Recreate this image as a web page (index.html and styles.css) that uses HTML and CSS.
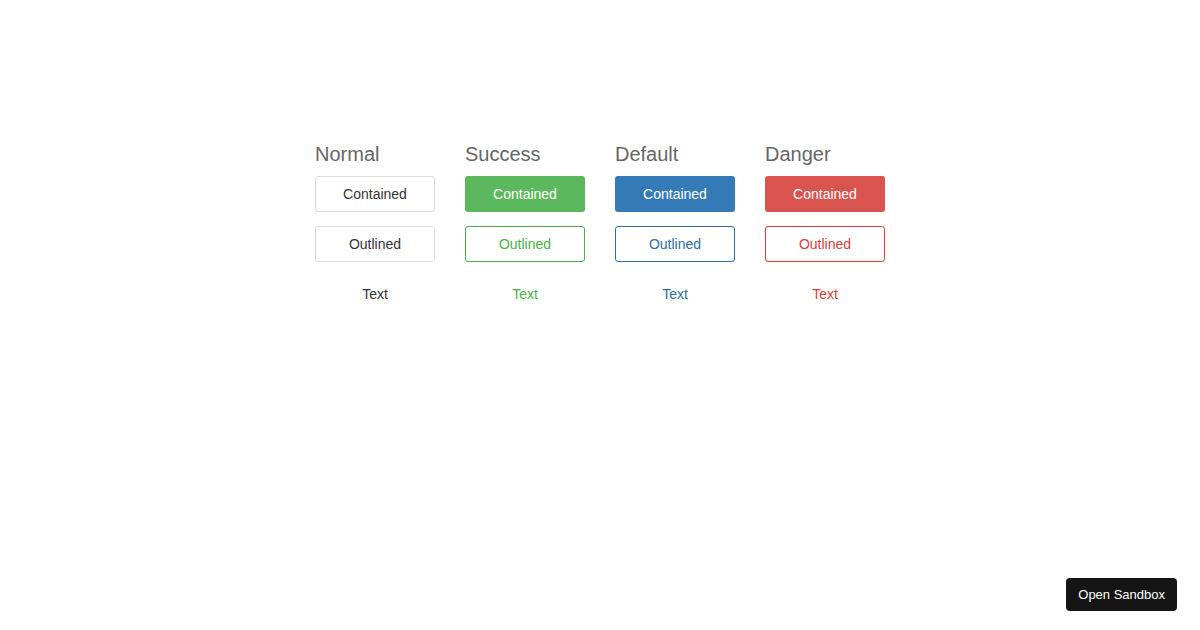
FILE: index.html
```html
<!DOCTYPE html>
<html lang="en">
<head>
  <meta charset="UTF-8">
  <title>Buttons</title>
  <link rel="stylesheet" href="styles.css">
</head>
<body>
  <main class="board">
    <!-- Normal -->
    <section class="group">
      <h2>Normal</h2>
      <button class="btn contained normal">Contained</button>
      <button class="btn outlined normal">Outlined</button>
      <button class="btn text normal">Text</button>
    </section>

    <!-- Success -->
    <section class="group">
      <h2>Success</h2>
      <button class="btn contained success">Contained</button>
      <button class="btn outlined success">Outlined</button>
      <button class="btn text success">Text</button>
    </section>

    <!-- Default -->
    <section class="group">
      <h2>Default</h2>
      <button class="btn contained primary">Contained</button>
      <button class="btn outlined primary">Outlined</button>
      <button class="btn text primary">Text</button>
    </section>

    <!-- Danger -->
    <section class="group">
      <h2>Danger</h2>
      <button class="btn contained danger">Contained</button>
      <button class="btn outlined danger">Outlined</button>
      <button class="btn text danger">Text</button>
    </section>
  </main>

  <a class="sandbox" href="#">Open Sandbox</a>
</body>
</html>
```

FILE: styles.css
```css
/* Page */
body {
  font-family: "Liberation Sans", Arial, sans-serif;
  margin: 0;
  padding: 0;
  background-color: #fff;
  color: #333;
}

.board {
  display: flex;
  justify-content: center;
  gap: 30px;
  padding-top: 140px;
}

.group {
  display: flex;
  flex-direction: column;
  gap: 14px;
  width: 120px;
}

.group h2 {
  margin: 0 0 -6px;
  font-size: 20px;
  font-weight: normal;
  line-height: 28px;
  color: #666;
}

/* Buttons */
.btn {
  height: 36px;
  font-family: inherit;
  font-size: 14px;
  border-radius: 3px;
  border: 1px solid transparent;
  background: transparent;
  padding: 0;
  cursor: pointer;
}

.btn.normal {
  color: #333;
}

.contained.normal,
.outlined.normal {
  background: #fff;
  border-color: #ddd;
}

.contained.success {
  background: #5cb85c;
  color: #fff;
}

.contained.primary {
  background: #337ab7;
  color: #fff;
}

.contained.danger {
  background: #d9534f;
  color: #fff;
}

.outlined.success,
.text.success {
  color: #4cae4c;
  border-color: #4cae4c;
}

.outlined.primary,
.text.primary {
  color: #2e6da4;
  border-color: #2e6da4;
}

.outlined.danger,
.text.danger {
  color: #d43f3a;
  border-color: #d43f3a;
}

.btn.text {
  border-color: transparent;
}

/* Sandbox link */
.sandbox {
  position: fixed;
  right: 23px;
  bottom: 19px;
  background: #151515;
  color: #fff;
  font-size: 13px;
  text-decoration: none;
  padding: 9px 12px;
  border-radius: 4px;
}
```
